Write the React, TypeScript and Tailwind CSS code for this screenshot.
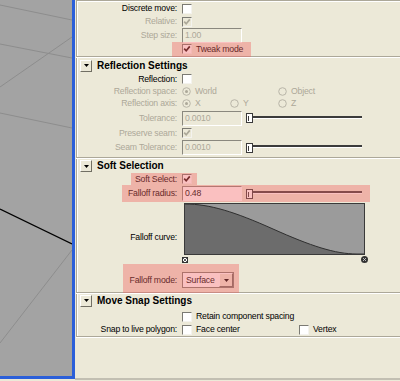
import React from "react";

const DIS = "text-[#aca899]";

function Check({ checked = false, disabled = false }: { checked?: boolean; disabled?: boolean }) {
  return (
    <div
      className={`relative w-[10px] h-[10px] shrink-0 border border-t-[#7b7a73] border-l-[#7b7a73] border-r-[#f4f3ee] border-b-[#f4f3ee] ${
        disabled ? "bg-[#ece9d8]" : "bg-white"
      }`}
    >
      {checked && (
        <svg className="absolute left-0 top-0" width="8" height="8" viewBox="0 0 8 8">
          <path
            d="M1.2 3.6 L3.2 5.8 L6.8 1.4"
            fill="none"
            stroke={disabled ? "#aca899" : "#2a0c0c"}
            strokeWidth="1.7"
          />
        </svg>
      )}
    </div>
  );
}

function Radio({ on = false, label }: { on?: boolean; label: string }) {
  return (
    <div className="flex items-center">
      <svg width="9" height="9" viewBox="0 0 9 9" className="shrink-0">
        <circle cx="4.5" cy="4.5" r="3.8" fill="#ece9d8" stroke="#b8b5a8" strokeWidth="1" />
        {on && <circle cx="4.5" cy="4.5" r="1.5" fill="#aca899" />}
      </svg>
      <span className={`ml-[4px] ${DIS}`}>{label}</span>
    </div>
  );
}

function Field({ value, disabled = false }: { value: string; disabled?: boolean }) {
  return (
    <div
      className={`w-[60px] h-[15px] shrink-0 flex items-center pl-[2px] border border-t-[#8a887e] border-l-[#8a887e] border-r-[#ffffff] border-b-[#ffffff] ${
        disabled ? `bg-[#ece9d8] ${DIS}` : "bg-white text-black"
      }`}
    >
      {value}
    </div>
  );
}

function Slider() {
  return (
    <div className="ml-[4px] flex items-center">
      <div className="relative w-[7px] h-[10px] bg-white border border-[#3a3a3a]">
        <div className="absolute left-[1px] top-[2px] w-[1px] h-[5px] bg-[#3a3a3a]" />
      </div>
      <div className="w-[109px] h-[3px] bg-[#3c3c3c] border-b border-white -mt-[2px]" />
    </div>
  );
}

function Row({
  label,
  disabled = false,
  h,
  children,
}: {
  label?: string;
  disabled?: boolean;
  h: string;
  children?: React.ReactNode;
}) {
  return (
    <div className={`flex items-center ${h}`}>
      <div className={`w-[100px] text-right whitespace-nowrap ${disabled ? DIS : "text-black"}`}>{label}</div>
      <div className="ml-[5px] flex items-center">{children}</div>
    </div>
  );
}

function Header({ title, h }: { title: string; h: string }) {
  return (
    <div className={`flex items-center ${h}`}>
      <div className="ml-[3px] w-[12px] h-[12px] flex items-center justify-center bg-[#ece9d8] border border-t-white border-l-white border-r-[#716f64] border-b-[#716f64]">
        <svg width="5" height="3" viewBox="0 0 5 3">
          <path d="M0 0 L5 0 L2.5 3 Z" fill="#000" />
        </svg>
      </div>
      <div className="ml-[5px] text-[10px] font-bold text-black tracking-normal">{title}</div>
    </div>
  );
}

const frame =
  "ml-[1px] w-[330px] border-l border-b border-[#aca899] shadow-[inset_1px_0_0_#ffffff,0_1px_0_#ffffff]";

export default function App() {
  return (
    <div className="relative w-[400px] h-[381px] overflow-hidden bg-[#ece9d8] flex font-['Liberation_Sans',Arial,sans-serif] text-[8.7px] tracking-[-0.2px] leading-none">
      {/* viewport */}
      <div className="w-[75px] h-[379px] shrink-0 bg-[#a3a3a3] border-r-[3px] border-b-[3px] border-[#2b5fd9]">
        <svg width="72" height="376" viewBox="0 0 72 376">
          <line x1="0" y1="5" x2="72" y2="20" stroke="#8d8d8d" strokeWidth="1" />
          <line x1="0" y1="44" x2="72" y2="58" stroke="#8d8d8d" strokeWidth="1" />
          <line x1="0" y1="87" x2="72" y2="37" stroke="#8d8d8d" strokeWidth="1" />
          <line x1="0" y1="113" x2="72" y2="128" stroke="#8d8d8d" strokeWidth="1" />
          <line x1="0" y1="209" x2="72" y2="244" stroke="#000" strokeWidth="1.3" />
          <line x1="72" y1="250" x2="0" y2="343" stroke="#8d8d8d" strokeWidth="1" />
        </svg>
      </div>

      {/* panel */}
      <div className="flex-1 h-[381px] flex flex-col">
        {/* frame 1 */}
        <div className={`${frame} border-t shadow-[inset_1px_1px_0_#ffffff,0_1px_0_#ffffff] pt-[1px]`}>
          <Row label="Discrete move:" h="h-[13px]">
            <Check />
          </Row>
          <Row label="Relative:" disabled h="h-[13px]">
            <Check checked disabled />
          </Row>
          <Row label="Step size:" disabled h="h-[14px]">
            <Field value="1.00" disabled />
          </Row>
          <Row h="h-[14px]">
            <Check checked />
            <span className="ml-[4px]">Tweak mode</span>
          </Row>
        </div>

        {/* frame 2 */}
        <div className={`${frame} mt-[1px] pb-[2px]`}>
          <Header title="Reflection Settings" h="h-[15px]" />
          <Row label="Reflection:" h="h-[12px]">
            <Check />
          </Row>
          <Row label="Reflection space:" disabled h="h-[12px]">
            <div className="grid grid-cols-[48px_48px_48px]">
              <Radio on label="World" />
              <div />
              <Radio label="Object" />
            </div>
          </Row>
          <Row label="Reflection axis:" disabled h="h-[12px]">
            <div className="grid grid-cols-[48px_48px_48px]">
              <Radio on label="X" />
              <Radio label="Y" />
              <Radio label="Z" />
            </div>
          </Row>
          <div className="h-[1px]" />
          <Row label="Tolerance:" disabled h="h-[16px]">
            <Field value="0.0010" disabled />
            <Slider />
          </Row>
          <Row label="Preserve seam:" disabled h="h-[14px]">
            <Check checked disabled />
          </Row>
          <Row label="Seam Tolerance:" disabled h="h-[15px]">
            <Field value="0.0010" disabled />
            <Slider />
          </Row>
        </div>

        {/* frame 3 */}
        <div className={`${frame} mt-[1px] pb-[4px]`}>
          <Header title="Soft Selection" h="h-[14px]" />
          <Row label="Soft Select:" h="h-[12px]">
            <Check checked />
          </Row>
          <Row label="Falloff radius:" h="h-[17px]">
            <Field value="0.48" />
            <Slider />
          </Row>
          <div className="mt-[1px] flex items-end">
            <div className="w-[100px] text-right pb-[13px]">Falloff curve:</div>
            <div className="ml-[7px] w-[181px] h-[52px] border border-[#3a3a3a] bg-[#9b9b9b]">
              <svg width="179" height="50" viewBox="0 0 179 50" className="block">
                <path
                  d="M0 0 C 25 0, 50 8, 88 25 S 150 50, 172 50 L179 50 L0 50 Z"
                  fill="#6c6c6c"
                />
                <path
                  d="M0 0 C 25 0, 50 8, 88 25 S 150 50, 172 50 L179 50"
                  fill="none"
                  stroke="#2f2f2f"
                  strokeWidth="1"
                />
              </svg>
            </div>
          </div>
          <div className="h-[8px] flex items-end">
            <div className="ml-[105px] w-[6px] h-[6px] border border-[#333] bg-white flex items-center justify-center">
              <svg width="4" height="4" viewBox="0 0 4 4">
                <path d="M0 0 L4 4 M4 0 L0 4" stroke="#333" strokeWidth="0.8" />
              </svg>
            </div>
            <div className="ml-[173px] w-[7px] h-[7px] rounded-full bg-[#333] flex items-center justify-center">
              <svg width="5" height="5" viewBox="0 0 5 5">
                <path d="M1 1 L4 4 M4 1 L1 4" stroke="#ddd" strokeWidth="0.8" />
              </svg>
            </div>
          </div>
          <div className="h-[9px]" />
          <Row label="Falloff mode:" h="h-[16px]">
            <div className="w-[52px] h-[16px] flex items-center border border-[#7f7d72] bg-white">
              <span className="ml-[3px] flex-1">Surface</span>
              <div className="w-[14px] h-[14px] flex items-center justify-center bg-[#ece9d8] border border-t-white border-l-white border-r-[#716f64] border-b-[#716f64]">
                <svg width="5" height="3" viewBox="0 0 5 3">
                  <path d="M0 0 L5 0 L2.5 3 Z" fill="#000" />
                </svg>
              </div>
            </div>
          </Row>
        </div>

        {/* frame 4 */}
        <div className={`${frame} mt-[1px]`}>
          <Header title="Move Snap Settings" h="h-[13px]" />
          <div className="h-[3px]" />
          <Row h="h-[13px]">
            <Check />
            <span className="ml-[4px]">Retain component spacing</span>
          </Row>
          <Row label="Snap to live polygon:" h="h-[13px]">
            <div className="grid grid-cols-[117px_100px] items-center">
              <div className="flex items-center">
                <Check />
                <span className="ml-[4px]">Face center</span>
              </div>
              <div className="flex items-center">
                <Check />
                <span className="ml-[4px]">Vertex</span>
              </div>
            </div>
          </Row>
        </div>

        <div className="flex-1" />
        <div className="h-[2px] bg-[#c2bfb2] mb-[1px]" />
      </div>

      {/* annotation highlights */}
      <div className="pointer-events-none absolute left-[172px] top-[42px] w-[79px] h-[15px] bg-[rgba(243,98,98,0.4)]" />
      <div className="pointer-events-none absolute left-[131px] top-[173px] w-[66px] h-[12px] bg-[rgba(243,98,98,0.4)]" />
      <div className="pointer-events-none absolute left-[122px] top-[185px] w-[248px] h-[17px] bg-[rgba(243,98,98,0.4)]" />
      <div className="pointer-events-none absolute left-[123px] top-[264px] w-[116px] h-[29px] bg-[rgba(243,98,98,0.4)]" />
    </div>
  );
}
